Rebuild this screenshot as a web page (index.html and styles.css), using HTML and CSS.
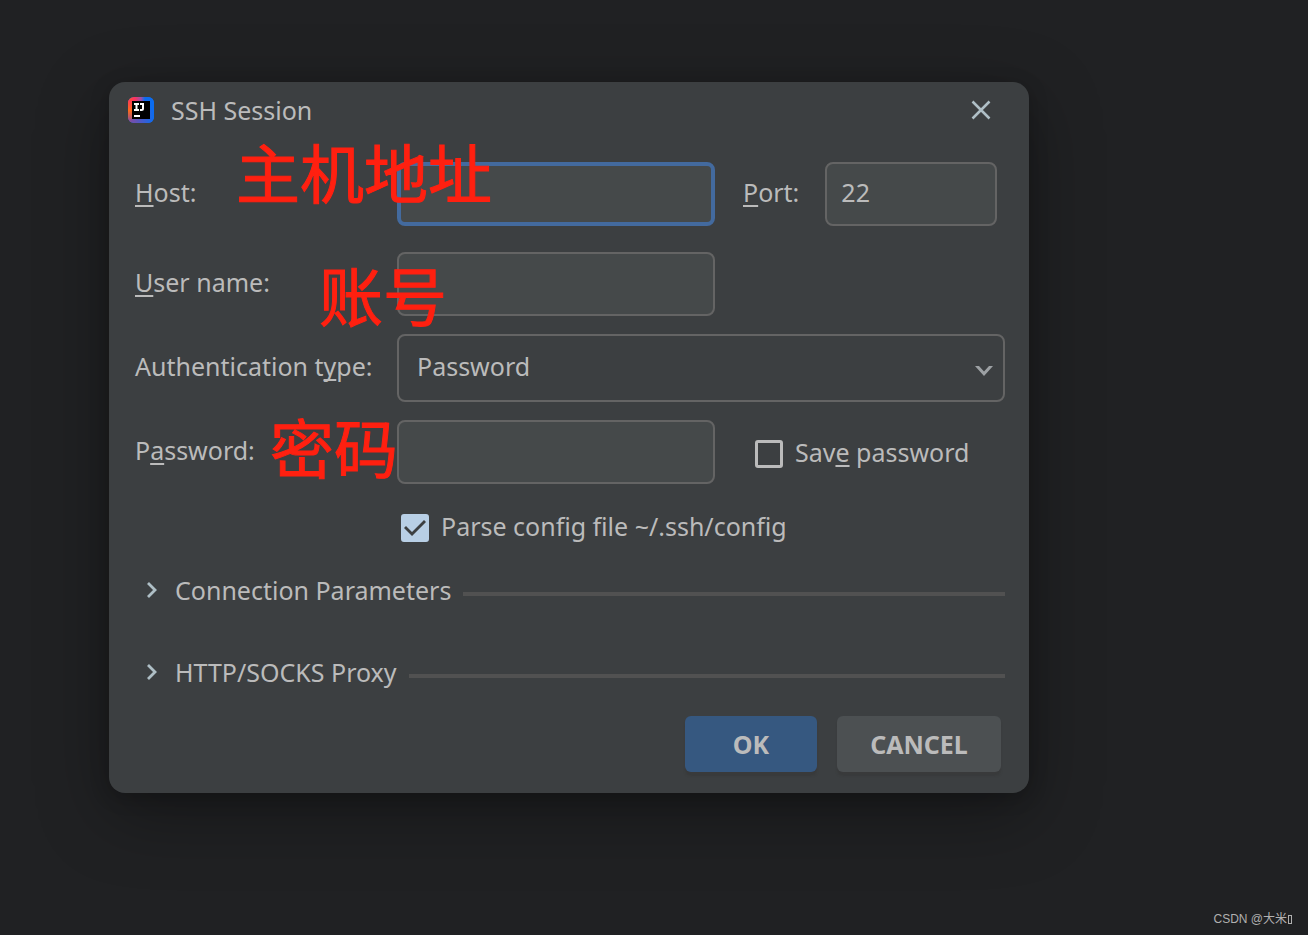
FILE: index.html
```html
<!DOCTYPE html>
<html lang="en">
<head>
<meta charset="utf-8">
<title>SSH Session</title>
<link rel="stylesheet" href="styles.css">
</head>
<body>
<main class="stage">
  <form class="dialog">
    <header class="titlebar">
      <svg class="logo" viewBox="0 0 26 26" aria-hidden="true">
        <defs>
          <linearGradient id="warm" x1="0" y1="0" x2="1" y2="0"><stop offset="0" stop-color="#fc5a26"/><stop offset=".25" stop-color="#fe315d"/><stop offset=".5" stop-color="#9b4fa8"/><stop offset=".65" stop-color="#0b6cf0"/></linearGradient>
          <linearGradient id="cool" x1="0" y1="0" x2="1" y2="0"><stop offset="0" stop-color="#8a4a9a"/><stop offset=".5" stop-color="#4a58c8"/><stop offset="1" stop-color="#0b6cf0"/></linearGradient>
          <linearGradient id="side" x1="0" y1="0" x2="0" y2="1"><stop offset="0" stop-color="#fe315d"/><stop offset=".5" stop-color="#fc6a1c"/><stop offset="1" stop-color="#8a4a9a"/></linearGradient>
          <clipPath id="tile"><rect width="26" height="26" rx="6"/></clipPath>
        </defs>
        <g clip-path="url(#tile)">
          <rect width="26" height="26" fill="#0b6cf0"/>
          <rect width="26" height="13" fill="url(#warm)"/>
          <rect y="13" width="26" height="13" fill="url(#cool)"/>
          <path d="M0 2 5 5V21L0 25Z" fill="url(#side)"/>
        </g>
        <rect x="4" y="4" width="18" height="18" fill="#000"/>
        <path d="M6 7h5M8.500 7v6M6 13h5M12 7h4M15 6v5.500q0 1.500-1.500 1.500H12M6 19h6" fill="none" stroke="#fff" stroke-width="2"/>
      </svg>
      <h1 class="title">SSH Session</h1>
      <button class="close" type="button" aria-label="Close">
        <svg viewBox="0 0 20 20" aria-hidden="true"><path d="M1.500 1.500 18.500 18.500M18.500 1.500 1.500 18.500" fill="none" stroke="#afbfc6" stroke-width="2.500"/></svg>
      </button>
    </header>

    <div class="content">
      <div class="row">
        <label class="name" for="host"><span class="key">H</span>ost:</label>
        <input class="field focused" id="host" type="text">
        <div class="port">
          <label class="name" for="port"><span class="key">P</span>ort:</label>
          <input class="field" id="port" type="text" value="22">
        </div>
        <span class="note note-host" lang="zh">主机地址</span>
      </div>
      <div class="row row-user">
        <label class="name" for="user"><span class="key">U</span>ser name:</label>
        <input class="field" id="user" type="text">
        <span class="note note-user" lang="zh">账号</span>
      </div>
      <div class="row row-auth">
        <label class="name" for="auth">Authentication t<span class="key">y</span>pe:</label>
        <div class="combo">
          <select id="auth"><option>Password</option></select>
          <svg class="arrow" viewBox="0 0 18 12" aria-hidden="true"><path d="M0 1H4L9 6.500 14 1H18L9 11Z" fill="#9da1a4"/></svg>
        </div>
      </div>
      <div class="row row-password">
        <label class="name" for="password">P<span class="key">a</span>ssword:</label>
        <input class="field" id="password" type="password">
        <label class="check save"><input type="checkbox"><span class="name">Sav<span class="key">e</span> password</span></label>
        <span class="note note-password" lang="zh">密码</span>
      </div>
      <div class="row row-parse">
        <label class="check parse"><input type="checkbox" checked><span class="name">Parse config file ~/.ssh/config</span></label>
      </div>
      <button class="section" type="button">
        <svg class="chevron" viewBox="0 0 12 18" aria-hidden="true"><path d="M3 2 10 9 3 16" fill="none" stroke="#afbfc6" stroke-width="2.800"/></svg>
        <span>Connection Parameters</span><span class="rule"></span>
      </button>
      <button class="section section-proxy" type="button">
        <svg class="chevron" viewBox="0 0 12 18" aria-hidden="true"><path d="M3 2 10 9 3 16" fill="none" stroke="#afbfc6" stroke-width="2.800"/></svg>
        <span>HTTP/SOCKS Proxy</span><span class="rule"></span>
      </button>
      <div class="actions">
        <button class="action ok" type="submit">OK</button>
        <button class="action cancel" type="button">CANCEL</button>
      </div>
    </div>
  </form>
  <footer class="credit" lang="zh">CSDN @大米<span class="box"></span></footer>
</main>
</body>
</html>
```
FILE: styles.css
```css
* { box-sizing: border-box; }

body {
  margin: 0;
  background: #202123;
  color: #bbbbbb;
  font: 25px/36px "Noto Sans", "Noto Sans CJK SC", sans-serif;
}

button, input, select { font: inherit; color: inherit; }
button { cursor: pointer; }

.stage {
  display: flex;
  flex-direction: column;
  min-height: 100vh;
  padding-top: 82px;
  overflow: hidden;
}

.dialog {
  margin: 0 279px 0 109px;
  background: #3c3f41;
  border-radius: 16px;
  box-shadow: 0 20px 70px rgba(0, 0, 0, 0.35), 0 4px 20px rgba(0, 0, 0, 0.2);
}

.titlebar {
  display: flex;
  align-items: center;
  height: 56px;
  padding: 0 38px 0 19px;
}

.logo { width: 26px; height: 26px; }

.title {
  flex: 1;
  margin: 0 0 0 17px;
  font-size: 25px;
  font-weight: 400;
}

.close {
  display: flex;
  padding: 0;
  border: 0;
  background: none;
}

.close svg { width: 20px; height: 20px; }

.content { padding: 24px 24px 21px 26px; }

.row {
  position: relative;
  display: grid;
  grid-template-columns: 262px minmax(0, 318fr) minmax(0, 290fr);
  align-items: center;
}

.row-user { margin-top: 26px; }
.row-auth, .row-password { margin-top: 18px; }
.row-parse { margin-top: 24px; }

.name { padding-bottom: 4px; }

.key {
  text-decoration: underline;
  text-decoration-thickness: 2px;
  text-decoration-skip-ink: none;
  text-underline-offset: 3px;
}

.field {
  width: 100%;
  min-width: 0;
  height: 64px;
  padding: 0 14px 4px;
  border: 2px solid #646464;
  border-radius: 8px;
  outline: 0;
  background: #45494a;
}

.focused { border: 4px solid #436a9e; }

.port {
  display: flex;
  align-items: center;
  gap: 26px;
  padding: 0 8px 0 28px;
}

.port .field { flex: 1; }

.combo {
  position: relative;
  grid-column: 2 / 4;
}

.combo select {
  display: block;
  width: 100%;
  height: 68px;
  padding: 0 48px 4px 18px;
  border: 2px solid #646464;
  border-radius: 8px;
  outline: 0;
  background: none;
  appearance: none;
}

.arrow {
  position: absolute;
  top: 31px;
  right: 12px;
  width: 18px;
  height: 12px;
  pointer-events: none;
}

.check {
  display: flex;
  align-items: center;
  gap: 12px;
  white-space: nowrap;
}

.check input {
  display: grid;
  place-items: center;
  width: 28px;
  height: 28px;
  margin: 0;
  border: 3px solid #bbbbbb;
  border-radius: 3px;
  appearance: none;
}

.check input:checked {
  border-color: #b8cfe5;
  background: #b8cfe5;
}

.check input:checked::after {
  content: "";
  width: 22px;
  height: 18px;
  background: #3c3f41;
  clip-path: polygon(0 9px, 2px 7px, 8px 13px, 20px 1px, 22px 3px, 8px 17px);
}

.save { padding: 4px 0 0 40px; }

.parse {
  grid-column: 2 / 4;
  padding-left: 4px;
}

.section {
  display: flex;
  align-items: center;
  width: 100%;
  margin-top: 24px;
  padding: 0 0 0 10px;
  border: 0;
  background: none;
  white-space: nowrap;
}

.section-proxy { margin-top: 46px; }

.chevron {
  width: 12px;
  height: 18px;
  margin-right: 18px;
}

.rule {
  flex: 1;
  height: 4px;
  margin: 8px 0 0 12px;
  background: #515151;
}

.actions {
  display: flex;
  justify-content: flex-end;
  gap: 20px;
  margin: 26px 4px 0 0;
}

.action {
  height: 56px;
  padding: 0;
  border: 0;
  border-radius: 6px;
  box-shadow: 0 4px 2px rgba(54, 54, 54, 0.5);
  font-weight: 700;
}

.ok { width: 132px; background: #365880; }
.cancel { width: 164px; background: #4c5052; }

.note {
  position: absolute;
  color: #ff2010;
  font: 64px/64px "Noto Sans CJK SC", sans-serif;
  -webkit-text-stroke: 1px #ff2010;
  white-space: nowrap;
  pointer-events: none;
}

.note-host { top: -24px; left: 101px; }
.note-user { top: 9px; left: 184px; }
.note-password { top: -7px; left: 135px; }

.credit {
  display: flex;
  align-items: center;
  justify-content: flex-end;
  margin-top: auto;
  padding: 0 16px 6px 0;
  color: #b0b0b0;
  font: 12px/20px "Liberation Sans", "Noto Sans CJK SC", sans-serif;
}

.box {
  width: 4px;
  height: 9px;
  margin-left: 1px;
  border: 1px solid #b0b0b0;
}
```
